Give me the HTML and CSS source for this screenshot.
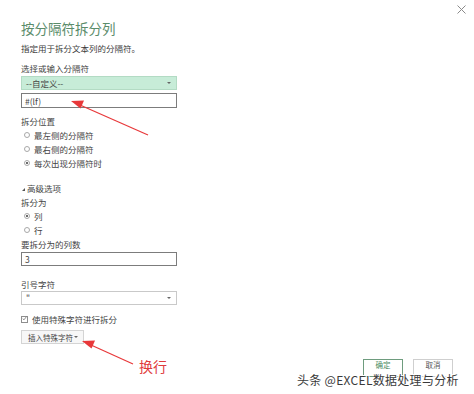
FILE: index.html
```html
<!DOCTYPE html>
<html lang="zh-CN">
<head>
<meta charset="utf-8">
<title>按分隔符拆分列</title>
<link rel="stylesheet" href="styles.css">
</head>
<body>
<div class="dialog">
  <div class="topbar">
    <svg class="close" width="9" height="9" viewBox="0 0 9 9"><path d="M0.5 0.5L8.5 8.5M8.5 0.5L0.5 8.5" stroke="#8a8a8a" stroke-width="1" fill="none"/></svg>
  </div>
  <div class="title">按分隔符拆分列</div>
  <div class="row subtitle">指定用于拆分文本列的分隔符。</div>
  <div class="row label1">选择或输入分隔符</div>
  <div class="select green"><span>--自定义--</span><i class="caret"></i></div>
  <div class="input tall">#(lf)</div>
  <div class="row pos-label">拆分位置</div>
  <div class="row radio"><span class="dot"></span>最左侧的分隔符</div>
  <div class="row radio"><span class="dot"></span>最右侧的分隔符</div>
  <div class="row radio"><span class="dot on"></span>每次出现分隔符时</div>
  <div class="row adv"><i class="tri"></i>高级选项</div>
  <div class="row">拆分为</div>
  <div class="row radio"><span class="dot on"></span>列</div>
  <div class="row radio short"><span class="dot"></span>行</div>
  <div class="row cols-label">要拆分为的列数</div>
  <div class="input cols">3</div>
  <div class="row quote-label">引号字符</div>
  <div class="select plain"><span>"</span><i class="caret"></i></div>
  <div class="row check-row"><span class="check"><svg width="7" height="7" viewBox="0 0 7 7"><path d="M1 3.6L2.8 5.4L6 1.2" stroke="#555" stroke-width="0.9" fill="none"/></svg></span>使用特殊字符进行拆分</div>
  <div class="special"><span>插入特殊字符</span><i class="caret"></i></div>
  <div class="footer">
    <div class="btn ok">确定</div>
    <div class="btn cancel">取消</div>
  </div>
</div>
<svg class="arrows" width="474" height="394" viewBox="0 0 474 394">
  <path d="M148 135L80 105" stroke="#e8383a" stroke-width="1.2" fill="none"/>
  <polygon points="71,101 84,100.5 80.5,108.5" fill="#e8383a"/>
  <path d="M133 364L91 345" stroke="#e8383a" stroke-width="1.2" fill="none"/>
  <polygon points="82,341 95,340.5 91.5,348.5" fill="#e8383a"/>
</svg>
<div class="note">换行</div>
<div class="watermark">头条 @EXCEL数据处理与分析</div>
</body>
</html>
```
FILE: styles.css
```css
* { box-sizing: border-box; }
html, body { margin: 0; padding: 0; background: #ffffff; }
body {
  width: 474px;
  height: 394px;
  overflow: hidden;
  font-family: "Noto Sans CJK SC", "Noto Sans", sans-serif;
  color: #444444;
}
.dialog {
  display: flex;
  flex-direction: column;
  padding: 0 8px 0 21px;
}
.topbar {
  height: 19px;
  display: flex;
  justify-content: flex-end;
  align-items: flex-start;
  padding-top: 5px;
}
.title {
  height: 18px;
  line-height: 18px;
  font-size: 13.5px;
  color: #5a8c6a;
}
.row {
  height: 14px;
  line-height: 14px;
  font-size: 8.5px;
  color: #444444;
  display: flex;
  align-items: center;
  white-space: nowrap;
}
.subtitle { margin-top: 4px; color: #3c3c3c; }
.label1 { margin-top: 6px; }
.select, .input {
  width: 156px;
  height: 14px;
  font-size: 8.5px;
  display: flex;
  align-items: center;
  padding: 0 5px 0 4px;
  color: #444;
}
.select { justify-content: space-between; }
.green {
  margin-top: 1px;
  background: #c7ecd8;
  border: 1px solid #b3dbc4;
}
.plain {
  background: #ffffff;
  border: 1px solid #c9c9c9;
}
.caret {
  width: 0;
  height: 0;
  border-left: 2px solid transparent;
  border-right: 2px solid transparent;
  border-top: 2.5px solid #666;
}
.input {
  border: 1px solid #7c7c7c;
  background: #fff;
  padding-left: 3px;
}
.tall { height: 15px; margin-top: 3px; }
.pos-label { margin-top: 6px; }
.radio { padding-left: 3px; }
.radio.short { height: 13px; }
.dot {
  width: 6px;
  height: 6px;
  border-radius: 50%;
  border: 1px solid #a8a8a8;
  margin-right: 4px;
  display: flex;
  align-items: center;
  justify-content: center;
  flex: none;
}
.dot.on::after {
  content: "";
  width: 2.5px;
  height: 2.5px;
  border-radius: 50%;
  background: #3a3a3a;
}
.adv { margin-top: 11px; padding-left: 1px; }
.tri {
  width: 0;
  height: 0;
  border-left: 3px solid transparent;
  border-bottom: 3px solid #555;
  margin-right: 2px;
  margin-top: 2px;
}
.cols-label { margin-top: 1px; }
.cols { margin-top: 1px; }
.quote-label { margin-top: 11px; }
.check-row { margin-top: 7px; }
.check {
  width: 7px;
  height: 7px;
  border: 1px solid #8e8e8e;
  margin-right: 4px;
  display: flex;
  align-items: center;
  justify-content: center;
  flex: none;
}
.check svg { display: block; margin-top: -1px; }
.special {
  margin-top: 4px;
  width: 63px;
  height: 14px;
  border: 1px solid #d4d4d4;
  background: #f7f7f7;
  font-size: 7.5px;
  color: #444;
  display: flex;
  align-items: center;
  justify-content: space-between;
  padding: 0 5px 0 6px;
}
.footer {
  margin-top: 15px;
  margin-right: 13px;
  display: flex;
  justify-content: flex-end;
  gap: 10px;
}
.btn {
  width: 40px;
  height: 18px;
  font-size: 7.5px;
  line-height: 9px;
  display: flex;
  justify-content: center;
  padding-top: 0;
  background: #fff;
}
.ok { border: 1px solid #6e9c7e; color: #4d8a62; }
.cancel { border: 1px solid #cfcfcf; color: #555; }
.arrows { position: absolute; left: 0; top: 0; pointer-events: none; }
.note {
  position: absolute;
  left: 139px;
  top: 356px;
  font-size: 14px;
  line-height: 20px;
  color: #e03a3c;
  font-family: "Noto Sans CJK SC", serif;
}
.watermark {
  position: absolute;
  left: 297px;
  top: 372.5px;
  font-size: 12px;
  line-height: 13px;
  letter-spacing: 0.3px;
  color: #3a3a3a;
  white-space: nowrap;
  text-shadow: 1px 1px 0 #fff, -1px -1px 0 #fff, 1px -1px 0 #fff, -1px 1px 0 #fff;
}
```
